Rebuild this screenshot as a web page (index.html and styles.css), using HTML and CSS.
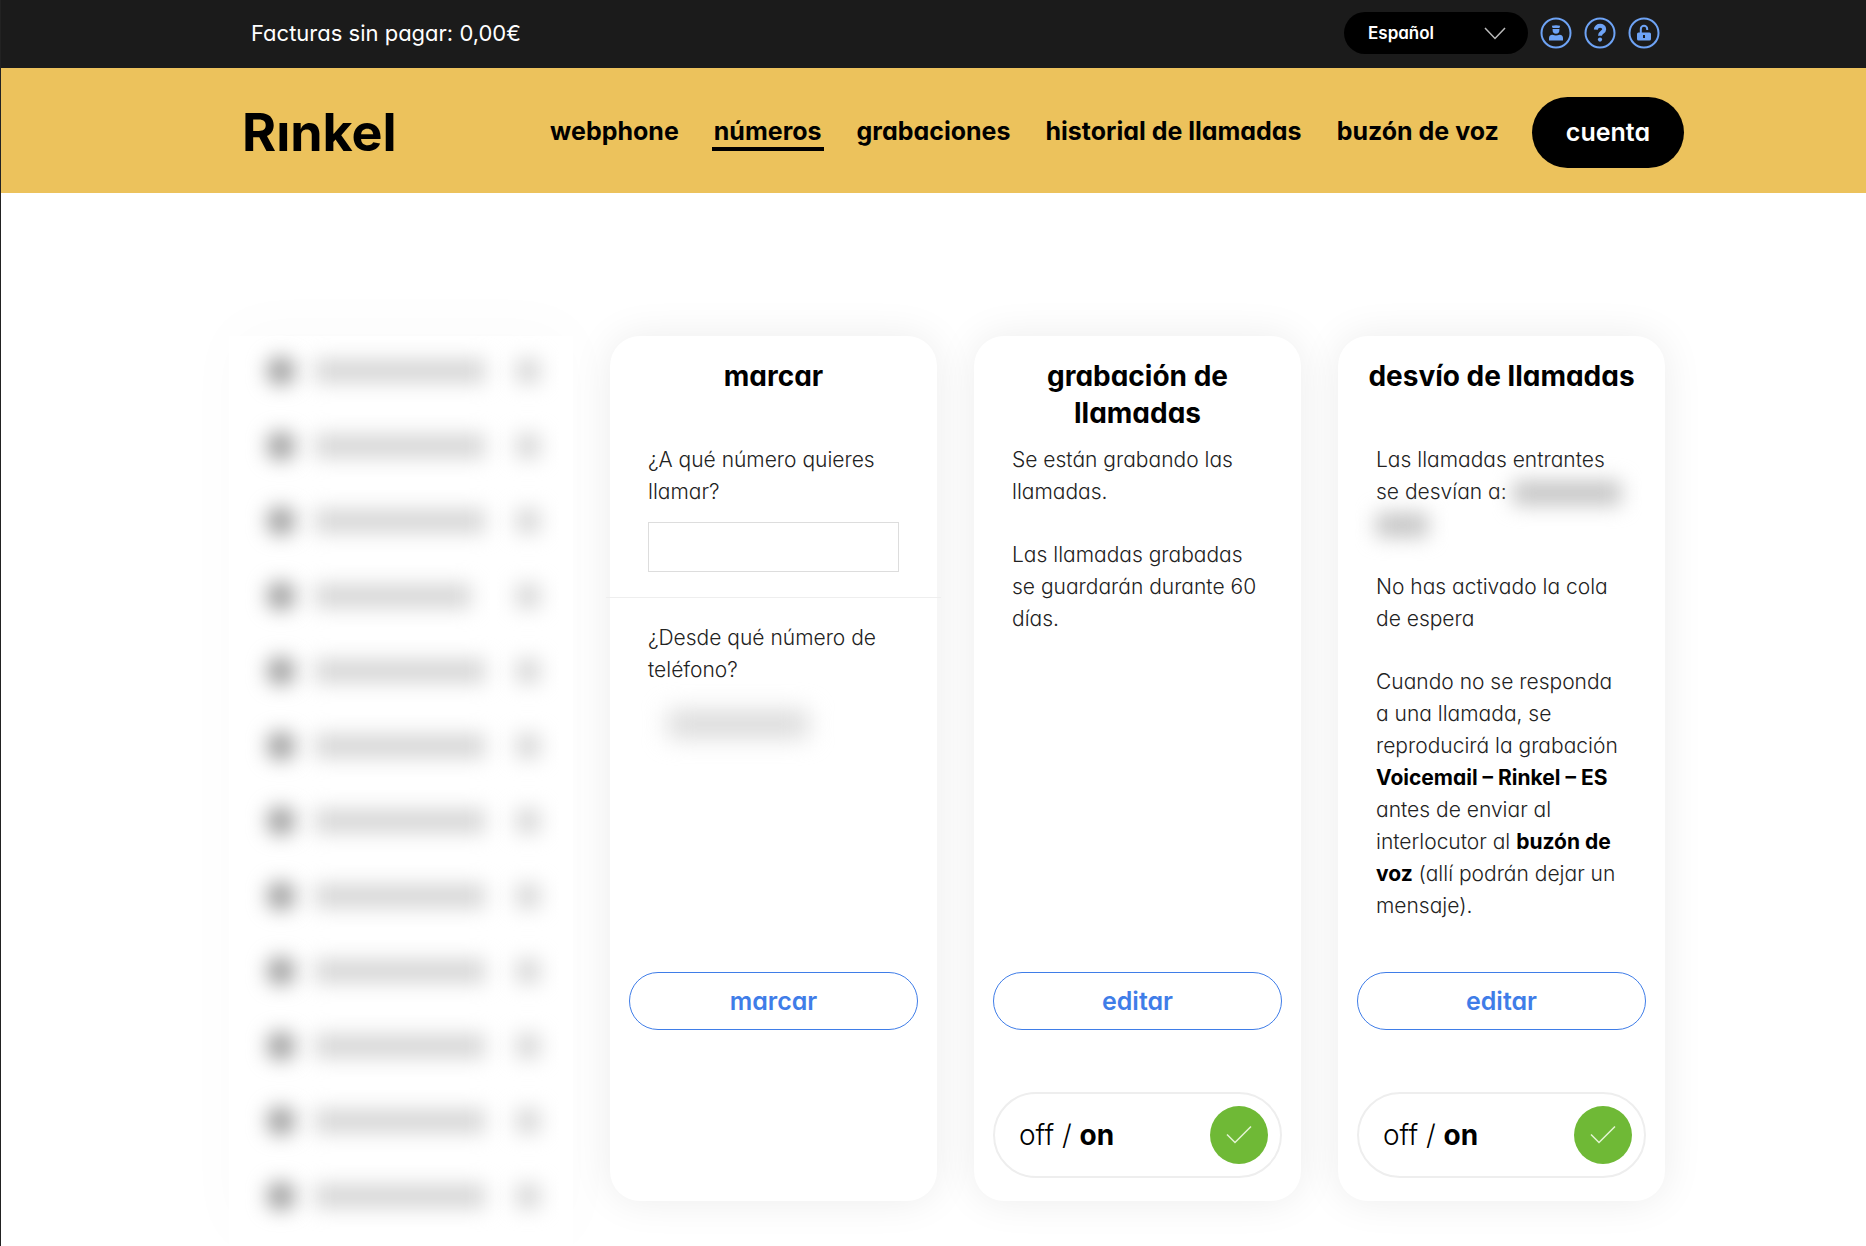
FILE: index.html
```html
<!DOCTYPE html>
<html lang="es">
<head>
    <meta charset="utf-8">
    <meta name="viewport" content="width=device-width, initial-scale=1">
    <title>Rinkel - números</title>
    <link rel="stylesheet" href="styles.css">
</head>
<body>
    <div class="topbar">
        <span class="invoices">Facturas sin pagar: 0,00€</span>
        <div class="topbar-tools">
            <div class="language">
                <select class="language-select" aria-label="Idioma">
                    <option>Español</option>
                    <option>English</option>
                    <option>Nederlands</option>
                </select>
                <svg class="language-arrow" viewBox="0 0 22 13" aria-hidden="true"><path d="M1 1l10 10.500L21 1"/></svg>
            </div>
            <a href="#" class="round-link" aria-label="Perfil">
                <svg viewBox="0 0 32 32" aria-hidden="true">
                    <circle class="ring" cx="16" cy="16" r="14.500"/>
                    <path d="M11.800 8.700q4.200-.8 8.400 0l-.8 2.300h-6.800zM12.600 12h6.800v1a3.400 3.800 0 0 1-6.800 0zM9 23.500v-2.500q0-3 3.400-3.200 3.600 1.400 7.200 0 3.400.2 3.400 3.200v2.500z"/>
                </svg>
            </a>
            <a href="#" class="round-link" aria-label="Ayuda">
                <svg viewBox="0 0 32 32" aria-hidden="true">
                    <circle class="ring" cx="16" cy="16" r="14.500"/>
                    <path class="mark" d="M11.800 12.600c.2-5.200 8.400-5 8.400-.4 0 3.200-4.200 2.800-4.200 6.600"/>
                    <circle cx="16" cy="22.600" r="2.100"/>
                </svg>
            </a>
            <a href="#" class="round-link" aria-label="Cerrar sesión">
                <svg viewBox="0 0 32 32" aria-hidden="true">
                    <circle class="ring" cx="16" cy="16" r="14.500"/>
                    <path class="shackle" d="M12.800 16v-4a3.200 3.200 0 0 1 6.400 0v1"/>
                    <path fill-rule="evenodd" d="M10.500 15.500h11a1.500 1.500 0 0 1 1.500 1.500v5a1.500 1.500 0 0 1-1.500 1.500h-11A1.500 1.500 0 0 1 9 22v-5a1.500 1.500 0 0 1 1.500-1.500zM15 18v3h2v-3z"/>
                </svg>
            </a>
        </div>
    </div>

    <header class="header">
        <a href="#" class="logo" aria-label="Rinkel">Rınkel</a>
        <nav class="nav">
            <a href="#">webphone</a>
            <a href="#" class="active">números</a>
            <a href="#">grabaciones</a>
            <a href="#">historial de llamadas</a>
            <a href="#">buzón de voz</a>
            <a href="#" class="account">cuenta</a>
        </nav>
    </header>

    <main class="content">
        <ul class="numbers" aria-hidden="true">
            <li><i class="dot"></i><i class="line"></i><i class="more"></i></li>
            <li><i class="dot"></i><i class="line"></i><i class="more"></i></li>
            <li><i class="dot"></i><i class="line"></i><i class="more"></i></li>
            <li><i class="dot"></i><i class="line short"></i><i class="more"></i></li>
            <li><i class="dot"></i><i class="line"></i><i class="more"></i></li>
            <li><i class="dot"></i><i class="line"></i><i class="more"></i></li>
            <li><i class="dot"></i><i class="line"></i><i class="more"></i></li>
            <li><i class="dot"></i><i class="line"></i><i class="more"></i></li>
            <li><i class="dot"></i><i class="line"></i><i class="more"></i></li>
            <li><i class="dot"></i><i class="line"></i><i class="more"></i></li>
            <li><i class="dot"></i><i class="line"></i><i class="more"></i></li>
            <li><i class="dot"></i><i class="line"></i><i class="more"></i></li>
        </ul>

        <div class="cards">
            <section class="card">
                <h2>marcar</h2>
                <div class="card-body">
                    <label for="dialNumber">¿A qué número quieres llamar?</label>
                    <input type="tel" id="dialNumber" class="text-input">
                    <hr>
                    <p>¿Desde qué número de teléfono?</p>
                    <i class="hidden-number"></i>
                </div>
                <button type="button" class="btn">marcar</button>
                <div class="switch-space"></div>
            </section>

            <section class="card">
                <h2>grabación de llamadas</h2>
                <div class="card-body">
                    <p>Se están grabando las llamadas.</p>
                    <p>Las llamadas grabadas se guardarán durante 60 días.</p>
                </div>
                <button type="button" class="btn">editar</button>
                <label class="switch">
                    <span>off / <b>on</b></span>
                    <span class="switch-knob">
                        <input type="checkbox" checked>
                        <svg viewBox="0 0 26 20" aria-hidden="true"><path d="M1 9.500l8 8L25 1.500"/></svg>
                    </span>
                </label>
            </section>

            <section class="card">
                <h2>desvío de llamadas</h2>
                <div class="card-body">
                    <p>Las llamadas entrantes se desvían a: <i class="hidden-name"></i> <i class="hidden-name small"></i></p>
                    <p>No has activado la cola de espera</p>
                    <p>Cuando no se responda a una llamada, se reproducirá la grabación <b>Voicemail – Rinkel – ES</b> antes de enviar al interlocutor al <b>buzón de voz</b> (allí podrán dejar un mensaje).</p>
                </div>
                <button type="button" class="btn">editar</button>
                <label class="switch">
                    <span>off / <b>on</b></span>
                    <span class="switch-knob">
                        <input type="checkbox" checked>
                        <svg viewBox="0 0 26 20" aria-hidden="true"><path d="M1 9.500l8 8L25 1.500"/></svg>
                    </span>
                </label>
            </section>
        </div>
    </main>
</body>
</html>
```
FILE: styles.css
```css
:root {
    --yellow: #ecc25c;
    --dark: #1b1b1b;
    --blue: #3f7de8;
    --light-blue: #6ea3f5;
    --green: #6fb936;
}

* {
    box-sizing: border-box;
}

body {
    font-family: Inter, "Open Sans", sans-serif;
    font-feature-settings: "cv11"; /* single-storey a */
    color: #000;
    background: #fff;
    margin: 0;
    border-left: 1px solid #222;
}

a {
    color: inherit;
    text-decoration: none;
}

button,
input,
select {
    font-family: inherit;
    font-feature-settings: inherit;
}

/* Top bar */
.topbar {
    display: flex;
    justify-content: space-between;
    align-items: center;
    height: 68px;
    padding: 0 206px 2px 250px;
    background: var(--dark);
    color: #fff;
}

.invoices {
    font-size: 22px;
}

.topbar-tools {
    display: flex;
    align-items: center;
    gap: 12px;
}

.language {
    display: grid;
    align-items: center;
}

.language-select {
    grid-area: 1 / 1;
    width: 184px;
    height: 42px;
    padding: 0 24px;
    border: 0;
    border-radius: 21px;
    background: #000;
    color: #fff;
    font-size: 17px;
    font-weight: 600;
    appearance: none;
}

.language-arrow {
    grid-area: 1 / 1;
    justify-self: end;
    width: 22px;
    margin-right: 22px;
    fill: none;
    stroke: #bbb;
    stroke-width: 1.500;
    pointer-events: none;
}

.round-link svg {
    display: block;
    width: 32px;
    height: 32px;
    fill: var(--light-blue);
}

.round-link .ring,
.round-link .mark,
.round-link .shackle {
    fill: none;
    stroke: var(--light-blue);
    stroke-width: 2;
}

.round-link .mark {
    stroke-width: 4;
}

/* Header */
.header {
    display: flex;
    justify-content: space-between;
    align-items: center;
    height: 125px;
    padding: 3px 182px 0 241px;
    background: var(--yellow);
}

.logo {
    font-size: 52px;
    font-weight: 700;
}

.nav {
    display: flex;
    align-items: center;
    gap: 31px;
    font-size: 25px;
    font-weight: 700;
}

.nav a {
    padding: 2px 2px 0;
    border-bottom: 4px solid transparent;
    line-height: 32px;
}

.nav .active {
    border-color: #000;
}

.nav .account {
    padding: 0 34px;
    border: 0;
    border-radius: 36px;
    background: #000;
    color: #fff;
    font-weight: 600;
    line-height: 71px;
}

/* Content */
.content {
    display: grid;
    grid-template-columns: 344px 1fr;
    align-items: start;
    gap: 37px;
    padding: 143px 201px 0 228px;
}

.numbers {
    list-style: none;
    margin: 0;
    padding: 0 33px 10px 38px;
    box-shadow: 0 -10px 60px rgba(0, 0, 0, 0.02);
}

.numbers li {
    display: flex;
    align-items: center;
    height: 75px;
    padding-bottom: 5px;
}

.numbers i {
    height: 24px;
    background: #d6d6d6;
    filter: blur(10px);
}

.numbers .dot {
    width: 28px;
    height: 28px;
    border-radius: 50%;
    background: #989898;
}

.numbers .line {
    width: 170px;
    margin-left: 20px;
}

.numbers .short {
    width: 156px;
}

.numbers .more {
    width: 24px;
    margin-left: auto;
}

.cards {
    display: grid;
    grid-template-columns: repeat(3, 1fr);
    gap: 37px;
}

.card {
    display: flex;
    flex-direction: column;
    padding: 22px 19px 23px;
    border-radius: 30px;
    background: #fff;
    box-shadow: 0 0 40px rgba(0, 0, 0, 0.08);
}

.card h2 {
    min-height: 74px;
    margin: 0 0 12px;
    font-size: 28px;
    font-weight: 700;
    line-height: 37px;
    text-align: center;
}

.card-body {
    flex: 1;
    padding: 0 19px;
    margin-bottom: 50px;
    font-size: 21px;
    font-weight: 300;
    line-height: 32px;
    color: #222;
}

.card-body p {
    margin: 0 0 31px;
}

.card-body p:last-child {
    margin-bottom: 0;
}

.card-body b {
    font-weight: 700;
    color: #000;
}

.card-body label {
    display: block;
}

.text-input {
    display: block;
    width: 100%;
    height: 50px;
    margin: 14px 0 25px;
    border: 1px solid #ddd;
    background: #fff;
    font-size: 21px;
}

.card-body hr {
    margin: 0 -42px 24px;
    border: 0;
    border-top: 1px solid #eee;
}

.hidden-number {
    display: block;
    width: 140px;
    height: 26px;
    margin: -6px 0 0 20px;
    background: #d8d8d8;
    filter: blur(12px);
}

.hidden-name {
    display: inline-block;
    width: 108px;
    height: 24px;
    background: #c4c4c4;
    filter: blur(10px);
    vertical-align: middle;
}

.hidden-name.small {
    width: 52px;
}

.btn {
    height: 58px;
    border: 1px solid var(--blue);
    border-radius: 29px;
    background: #fff;
    color: var(--blue);
    font-size: 25px;
    font-weight: 600;
}

.switch,
.switch-space {
    height: 86px;
    margin-top: 62px;
}

.switch {
    display: flex;
    justify-content: space-between;
    align-items: center;
    padding: 0 12px 0 24px;
    border: 2px solid #eee;
    border-radius: 43px;
    font-size: 28px;
    font-weight: 300;
}

.switch b {
    font-weight: 700;
}

.switch-knob {
    display: grid;
    place-items: center;
}

.switch-knob input {
    grid-area: 1 / 1;
    width: 58px;
    height: 58px;
    margin: 0;
    border-radius: 50%;
    background: #ccc;
    appearance: none;
}

.switch-knob input:checked {
    background: var(--green);
}

.switch-knob svg {
    grid-area: 1 / 1;
    width: 26px;
    z-index: 1;
    fill: none;
    stroke: #e4f5d4;
    stroke-width: 1.500;
    pointer-events: none;
}
```
